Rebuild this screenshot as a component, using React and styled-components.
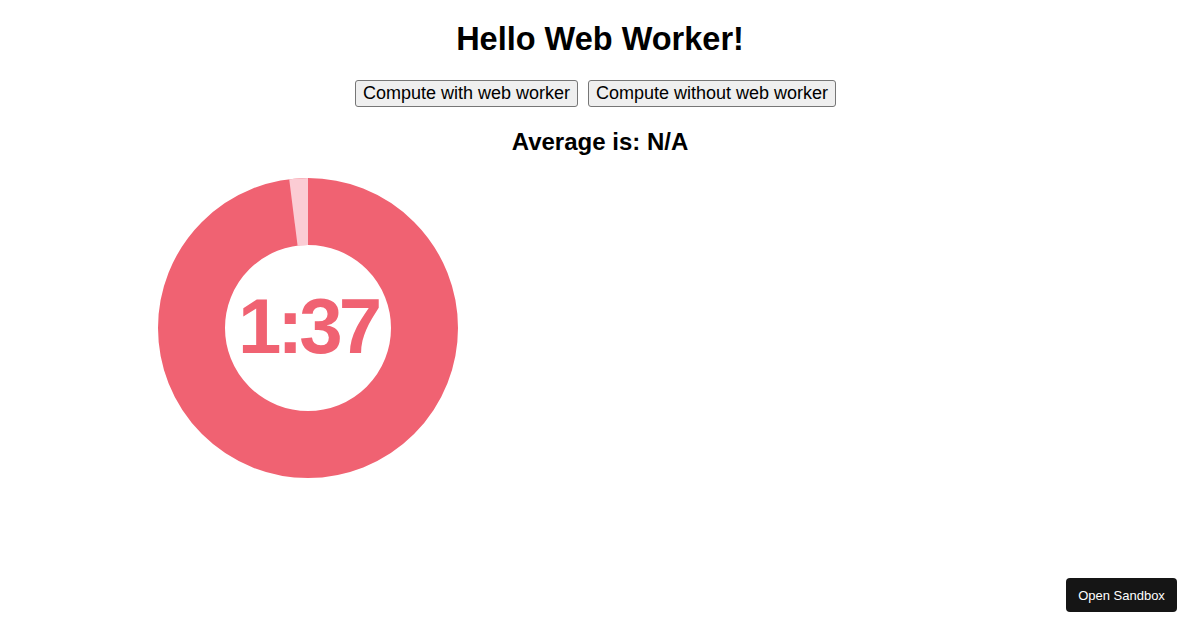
import React from "react";
import styled, { createGlobalStyle } from "styled-components";

const Global = createGlobalStyle`
  html, body { margin: 0; padding: 0; background: #fff; }
  body { margin: 8px; font-family: "Liberation Sans", Arial, sans-serif; color: #000; }
`;

const Page = styled.div`
  display: flex;
  flex-direction: column;
  align-items: stretch;
`;

const Title = styled.h1`
  margin: 13.44px 0 21.44px;
  font-size: 32.5px;
  font-weight: bold;
  text-align: center;
  line-height: 36.8px;
`;

const Actions = styled.div`
  display: flex;
  justify-content: center;
  gap: 10px;
  padding-right: 9px;
`;

const Button = styled.button`
  font-family: "Liberation Sans", Arial, sans-serif;
  font-size: 18px;
  line-height: 21px;
  padding: 2px 7px;
  color: #000;
  background: #efefef;
  border: 1px solid #767676;
  border-radius: 3px;
  cursor: pointer;
`;

const Average = styled.h2`
  margin: 21px 0 23px;
  font-size: 24px;
  font-weight: bold;
  text-align: center;
  line-height: 27.6px;
`;

const ChartWrap = styled.div`
  position: relative;
  width: 300px;
  height: 300px;
  margin-left: 150px;
`;

const Time = styled.div`
  position: absolute;
  inset: 0;
  display: flex;
  align-items: center;
  justify-content: center;
  font-family: "Liberation Sans", Arial, sans-serif;
  font-weight: bold;
  font-size: 78px;
  letter-spacing: -4px;
  color: #f06272;
  padding-bottom: 4px;
`;

const SandboxButton = styled.a`
  position: fixed;
  right: 23px;
  bottom: 18px;
  width: 111px;
  height: 34px;
  display: flex;
  align-items: center;
  justify-content: center;
  background: #151515;
  color: #fff;
  border-radius: 4px;
  font-family: "Liberation Sans", Arial, sans-serif;
  font-size: 13px;
  text-decoration: none;
`;

function Donut({ fraction }) {
  const cx = 150, cy = 150, R = 150, r = 83;
  const a = fraction * 2 * Math.PI;
  const sx = cx - R * Math.sin(a), sy = cy - R * Math.cos(a);
  const ix = cx - r * Math.sin(a), iy = cy - r * Math.cos(a);
  const d = `M ${cx} ${cy - R} L ${sx} ${sy} L ${ix} ${iy} L ${cx} ${cy - r} Z`;
  return (
    <svg width="300" height="300" viewBox="0 0 300 300">
      <circle cx={cx} cy={cy} r={(R + r) / 2} fill="none" stroke="#f06272" strokeWidth={R - r} />
      <path d={d} fill="#fbccd4" />
    </svg>
  );
}

export default function App() {
  return (
    <>
      <Global />
      <Page>
        <Title>Hello Web Worker!</Title>
        <Actions>
          <Button>Compute with web worker</Button>
          <Button>Compute without web worker</Button>
        </Actions>
        <Average>Average is: N/A</Average>
        <ChartWrap>
          <Donut fraction={0.02} />
          <Time>1:37</Time>
        </ChartWrap>
      </Page>
      <SandboxButton href="#">Open Sandbox</SandboxButton>
    </>
  );
}
